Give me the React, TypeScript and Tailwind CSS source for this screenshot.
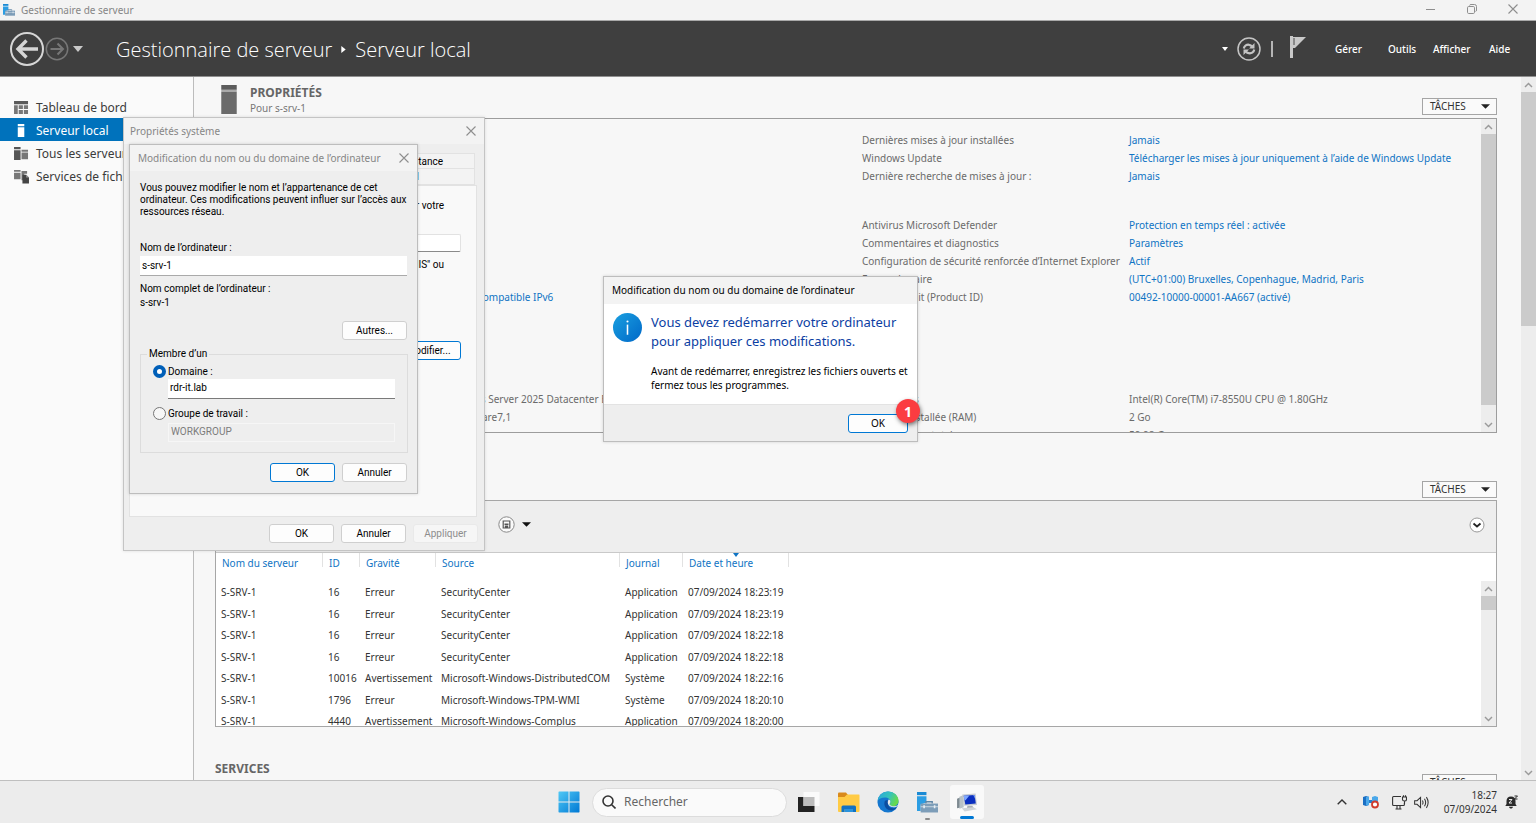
import React, { useState } from "react";

const ui = "font-['Noto_Sans','Open_Sans',sans-serif]";
const classic = "font-['Roboto','Liberation_Sans',sans-serif]";

type Property = { label: string; value: string; link?: boolean };

const networkProps: Property[][] = [
  [
    { label: "Nom de l’ordinateur", value: "s-srv-1", link: true },
    { label: "Groupe de travail", value: "WORKGROUP", link: true },
    { label: "", value: "" },
  ],
  [
    { label: "Pare-feu Microsoft Defender", value: "Public : actif", link: true },
    { label: "Gestion à distance", value: "Activé", link: true },
    { label: "Bureau à distance", value: "Désactivé", link: true },
    { label: "Association de cartes réseau", value: "Désactivé", link: true },
    { label: "Ethernet0", value: "192.168.100.201, compatible IPv6", link: true },
  ],
  [
    { label: "Version du système", value: "Microsoft Windows Server 2025 Datacenter Evaluation" },
    { label: "Informations matérielles", value: "VMware, Inc. VMware7,1" },
  ],
];

const updateProps: Property[][] = [
  [
    { label: "Dernières mises à jour installées", value: "Jamais", link: true },
    {
      label: "Windows Update",
      value: "Télécharger les mises à jour uniquement à l’aide de Windows Update",
      link: true,
    },
    { label: "Dernière recherche de mises à jour :", value: "Jamais", link: true },
  ],
  [
    { label: "Antivirus Microsoft Defender", value: "Protection en temps réel : activée", link: true },
    { label: "Commentaires et diagnostics", value: "Paramètres", link: true },
    { label: "Configuration de sécurité renforcée d’Internet Explorer", value: "Actif", link: true },
    { label: "Fuseau horaire", value: "(UTC+01:00) Bruxelles, Copenhague, Madrid, Paris", link: true },
    { label: "ID de produit (Product ID)", value: "00492-10000-00001-AA667 (activé)", link: true },
  ],
  [
    { label: "Processeurs", value: "Intel(R) Core(TM) i7-8550U CPU @ 1.80GHz" },
    { label: "Mémoire installée (RAM)", value: "2 Go" },
    { label: "Espace disque total", value: "59,98 Go" },
  ],
];

const events = [
  ["S-SRV-1", "16", "Erreur", "SecurityCenter", "Application", "07/09/2024 18:23:19"],
  ["S-SRV-1", "16", "Erreur", "SecurityCenter", "Application", "07/09/2024 18:23:19"],
  ["S-SRV-1", "16", "Erreur", "SecurityCenter", "Application", "07/09/2024 18:22:18"],
  ["S-SRV-1", "16", "Erreur", "SecurityCenter", "Application", "07/09/2024 18:22:18"],
  ["S-SRV-1", "10016", "Avertissement", "Microsoft-Windows-DistributedCOM", "Système", "07/09/2024 18:22:16"],
  ["S-SRV-1", "1796", "Erreur", "Microsoft-Windows-TPM-WMI", "Système", "07/09/2024 18:20:10"],
  ["S-SRV-1", "4440", "Avertissement", "Microsoft-Windows-Complus", "Application", "07/09/2024 18:20:00"],
];

function Chevron({ down = false }: { down?: boolean }) {
  return (
    <svg viewBox="0 0 9 6" className="h-[6px] w-[9px]" fill="none" stroke="#9a9a9a" strokeWidth="1.4">
      <path d={down ? "M1 1l3.5 3.6L8 1" : "M1 5l3.5-3.6L8 5"} />
    </svg>
  );
}

function ScrollBar({ thumb }: { thumb: string }) {
  return (
    <div className="flex w-[15px] shrink-0 flex-col items-center bg-[#ededed]">
      <div className="flex h-[15px] shrink-0 items-center">
        <Chevron />
      </div>
      <div className="min-h-0 w-full flex-1">
        <div className={`w-full bg-[#cbcbcb] ${thumb}`} />
      </div>
      <div className="flex h-[15px] shrink-0 items-center">
        <Chevron down />
      </div>
    </div>
  );
}

function ServerManagerIcon({ className }: { className: string }) {
  return (
    <svg viewBox="0 0 20 20" className={className}>
      <path fill="#1a8ad4" d="M0 0h9v3H0z" />
      <path fill="#2b9de3" d="M0 4h9v6l-5.500 2v6H0z" />
      <path fill="none" stroke="#5f86a6" strokeWidth="1.3" d="M8.500 11V9.300h6V11" />
      <path fill="#7d9db8" d="M3.500 11h16.500v8.500h-16.500z" />
      <path fill="#c3d2de" d="M3.500 13.500h16.500v1h-16.500z" />
      <path fill="#e9eff4" d="M6 12.500h1.500v3H6zM16 12.500h1.500v3H16z" />
    </svg>
  );
}

function CloseIcon() {
  return (
    <svg viewBox="0 0 10 10" className="size-[10px]" fill="none" stroke="#8e8e8e" strokeWidth="1.100">
      <path d="M.5.5l9 9M9.500.5l-9 9" />
    </svg>
  );
}

function TitleBar() {
  return (
    <div className="flex h-[21px] shrink-0 items-center border-b border-[#a9a9a9] bg-[#f3f3f3] pl-[3px] text-[10px] text-[#868686]">
      <ServerManagerIcon className="size-[12px]" />
      <span className="ml-[6px]">Gestionnaire de serveur</span>
      <div className="mr-[18px] ml-auto flex items-center gap-[31px] pb-[2px]">
        <button aria-label="Réduire" className="flex">
          <svg viewBox="0 0 10 10" className="size-[10px]" fill="none" stroke="#8e8e8e">
            <path d="M0 5.500h9" />
          </svg>
        </button>
        <button aria-label="Restaurer" className="flex">
          <svg viewBox="0 0 10 10" className="size-[10px]" fill="none" stroke="#8e8e8e">
            <rect x=".5" y="2.500" width="7" height="7" rx="1.200" />
            <path d="M2.500 1.500q.2-1 1.500-1h3.500q2 0 2 2V6q0 1.300-1 1.500" />
          </svg>
        </button>
        <button aria-label="Fermer" className="flex">
          <CloseIcon />
        </button>
      </div>
    </div>
  );
}

function Header() {
  return (
    <header className="flex h-[56px] shrink-0 items-center border-b border-[#8f8f8f] bg-[#3f3f3f] pl-[9px] text-white">
      <button aria-label="Précédent">
        <svg viewBox="0 0 36 36" className="size-[36px]" fill="none" stroke="#d6d6d6">
          <circle cx="18" cy="18" r="16" strokeWidth="2" />
          <path strokeWidth="3.400" d="M29 18H10M17.500 9.500L9 18l8.500 8.500" />
        </svg>
      </button>
      <button aria-label="Suivant">
        <svg viewBox="0 0 24 24" className="size-[24px]" fill="none" stroke="#777">
          <circle cx="12" cy="12" r="10.700" strokeWidth="1.500" />
          <path strokeWidth="2" d="M5.500 12h12M12.500 6.500L18 12l-5.500 5.500" />
        </svg>
      </button>
      <button aria-label="Historique" className="ml-[4px]">
        <svg viewBox="0 0 10 6" className="h-[6px] w-[10px]" fill="#c9c9c9">
          <path d="M0 0h10L5 6z" />
        </svg>
      </button>
      <h1 className="ml-[33px] flex items-center pt-[2px] font-['Open_Sans','Noto_Sans',sans-serif] text-[20px] font-light whitespace-nowrap">
        <span>Gestionnaire de serveur</span>
        <svg viewBox="0 0 5 8" className="mx-[9px] h-[7px] w-[5px]" fill="#fff">
          <path d="M0 0l5 4-5 4z" />
        </svg>
        <span>Serveur local</span>
      </h1>
      <div className="ml-auto flex items-center text-[10px]">
        <button aria-label="Notifications récentes">
          <svg viewBox="0 0 6 4" className="h-[4px] w-[6px]" fill="#fff">
            <path d="M0 0h6L3 4z" />
          </svg>
        </button>
        <button aria-label="Actualiser" className="ml-[9px]">
          <svg viewBox="0 0 24 24" className="size-[24px]" fill="none" stroke="#c4c4c4">
            <circle cx="12" cy="12" r="11" strokeWidth="1.500" />
            <path strokeWidth="2.200" d="M6.800 11.500c.4-3 3-4.200 5.400-3.700 1.300.2 2.200.9 2.900 1.700M17.200 12.500c-.4 3-3 4.200-5.400 3.700-1.300-.2-2.200-.9-2.900-1.700" />
            <path fill="#c4c4c4" stroke="none" d="M17.500 6v5.500H12zM6.500 18v-5.500H12z" />
          </svg>
        </button>
        <div className="ml-[10px] h-[16px] w-[2px] bg-[#b5b5b5]" />
        <button aria-label="Notifications" className="mb-[4px] ml-[17px]">
          <svg viewBox="0 0 16 22" className="h-[22px] w-[16px]">
            <path fill="#c9c9c9" d="M0 0h3v22H0z" />
            <path fill="#c9c9c9" d="M3 1h13L5 12H3z" />
            <path stroke="#4a4a4a" d="M4 2v7" />
          </svg>
        </button>
        <nav className="ml-[29px] flex pt-[1px] font-medium">
          <button className="w-[53px] text-left">Gérer</button>
          <button className="w-[45px] text-left">Outils</button>
          <button className="w-[56px] text-left">Afficher</button>
          <button className="w-[47px] text-left">Aide</button>
        </nav>
      </div>
    </header>
  );
}

const navIcons: Record<string, React.ReactNode> = {
  dashboard: (
    <g fill="#5a5a5a">
      <path d="M0 0h15v3.500H0z" />
      <path fill="#777" d="M0 4.500h4V14H0zM5 4.500h4.500v4.200H5zM10.500 4.500H15v4.200h-4.500zM5 9.700h4.500V14H5zM10.500 9.700H15V14h-4.500z" />
    </g>
  ),
  local: <path fill="#fff" d="M4 0h7v2.500H4zM4 3.500h7V14H4z" />,
  all: (
    <g fill="#555">
      <path d="M0 0h7v2.500H0zM0 3.500h7V14H0z" />
      <path fill="#777" d="M8 3h7v2H8zM8 6h7v7H8z" />
    </g>
  ),
  files: (
    <g fill="#777">
      <path d="M0 0h7v2H0zM0 3h7v7H0zM8 1h6v3h-3v7H8z" />
      <path fill="#444" d="M9 5h4l3 3v6.500H9z" />
      <path fill="#999" d="M13 5l3 3h-3z" />
    </g>
  ),
};

const navItems = [
  { icon: "dashboard", label: "Tableau de bord" },
  { icon: "local", label: "Serveur local" },
  { icon: "all", label: "Tous les serveurs" },
  { icon: "files", label: "Services de fichiers et de stockage" },
];

function Sidebar() {
  return (
    <nav className="w-[194px] shrink-0 border-r border-[#bcbcbc] bg-[#fafafa] pt-[18px] text-[12px] text-[#3b3b3b]">
      {navItems.map((item) => (
        <a
          key={item.icon}
          href="#"
          className={`flex h-[23px] items-center gap-[7px] overflow-hidden pt-[2px] pl-[14px] whitespace-nowrap ${
            item.icon === "local" ? "bg-[#0072bc] text-white" : ""
          }`}
        >
          <svg viewBox="0 0 16 15" className="h-[14px] w-[15px] shrink-0">
            {navIcons[item.icon]}
          </svg>
          {item.label}
        </a>
      ))}
    </nav>
  );
}

function TasksButton() {
  return (
    <button className="flex h-[17px] w-[75px] items-center justify-between border border-[#a5a5a5] bg-[#fafafa] pr-[6px] pl-[7px] text-[10px] text-[#333]">
      TÂCHES
      <svg viewBox="0 0 10 5" className="h-[5px] w-[9px]" fill="#222">
        <path d="M0 0h10L5 5z" />
      </svg>
    </button>
  );
}

function PropertyColumn({ groups, columns }: { groups: Property[][]; columns: string }) {
  return (
    <dl className="flex flex-col">
      {groups.map((group, i) => (
        <div key={i} className={i === 0 ? "" : i === 1 ? "mt-[31px]" : "mt-[84px]"}>
          {group.map((p, j) => (
            <div key={j} className={`grid h-[18px] items-center whitespace-nowrap ${columns}`}>
              <dt>{p.label}</dt>
              <dd>
                {p.link ? (
                  <a href="#" className="text-[#0f74c4]">
                    {p.value}
                  </a>
                ) : (
                  p.value
                )}
              </dd>
            </div>
          ))}
        </div>
      ))}
    </dl>
  );
}

function PropertiesSection() {
  return (
    <section>
      <div className="flex h-[41px] items-start">
        <svg viewBox="0 0 16 30" className="mt-[8px] ml-[6px] h-[29px] w-[16px]">
          <path fill="#5c5c5c" d="M0 0h16v5H0z" />
          <path fill="#aaa" d="M0 5h16v2H0z" />
          <path fill="#6b6b6b" d="M0 7h16v23H0z" />
        </svg>
        <div className="mt-[8px] ml-[13px]">
          <h2 className="text-[12px] leading-[16px] font-bold text-[#666]">PROPRIÉTÉS</h2>
          <p className="text-[10px] leading-[15px] text-[#777]">Pour s-srv-1</p>
        </div>
        <div className="mt-[21px] ml-auto">
          <TasksButton />
        </div>
      </div>
      <div className="flex h-[315px] overflow-hidden border border-[#9d9d9d] text-[10px] text-[#6b6b6b]">
        <div className="flex flex-1 pt-[12px] pl-[6px]">
          <div className="w-[640px] shrink-0">
            <PropertyColumn groups={networkProps} columns="grid-cols-[174px_1fr]" />
          </div>
          <PropertyColumn groups={updateProps} columns="grid-cols-[267px_1fr]" />
        </div>
        <ScrollBar thumb="h-[271px]" />
      </div>
    </section>
  );
}

function EventsSection() {
  return (
    <section>
      <div className="flex h-[67px] items-start justify-between">
        <div className="mt-[34px]">
          <h2 className="text-[12px] leading-[16px] font-bold text-[#666]">ÉVÉNEMENTS</h2>
          <p className="text-[10px] leading-[15px] text-[#777]">Tous les événements | 10 au total</p>
        </div>
        <div className="mt-[48px]">
          <TasksButton />
        </div>
      </div>
      <div className="flex h-[227px] flex-col overflow-hidden border border-[#a6a6a6] bg-white text-[10px]">
        <div className="flex h-[52px] shrink-0 items-center border-b border-[#c9c9c9] bg-[#eeeeee] pr-[11px] pb-[4px] pl-[282px]">
          <button aria-label="Enregistrer la requête">
            <svg viewBox="0 0 17 17" className="size-[17px]" fill="none" stroke="#8a8a8a">
              <circle cx="8.500" cy="8.500" r="7.700" fill="#fafafa" />
              <path stroke="#555" strokeWidth="1.200" d="M5.200 5h6.600v7H5.200z" />
              <path fill="#555" stroke="none" d="M6.500 7.500h4v1.500h-4zM6.800 9.500h3.400V12H6.800z" />
            </svg>
          </button>
          <button aria-label="Requêtes enregistrées" className="ml-[7px]">
            <svg viewBox="0 0 10 5" className="h-[5px] w-[9px]" fill="#111">
              <path d="M0 0h10L5 5z" />
            </svg>
          </button>
          <button aria-label="Développer les critères" className="ml-auto">
            <svg viewBox="0 0 16 16" className="size-[16px]" fill="none">
              <circle cx="8" cy="8" r="7" fill="#fff" stroke="#999" />
              <path stroke="#222" strokeWidth="1.800" d="M4.500 6.500L8 9.500l3.500-3" />
            </svg>
          </button>
        </div>
        <div className="flex min-h-0 flex-1 items-start">
          <table className="w-[573px] shrink-0 table-fixed border-collapse whitespace-nowrap text-[#333]">
            <colgroup>
              <col className="w-[107px]" />
              <col className="w-[37px]" />
              <col className="w-[76px]" />
              <col className="w-[184px]" />
              <col className="w-[63px]" />
              <col className="w-[106px]" />
            </colgroup>
            <thead>
              <tr className="h-[29px] text-left text-[#0f74c4]">
                {["Nom du serveur", "ID", "Gravité", "Source", "Journal", "Date et heure"].map((h) => (
                  <th key={h} className="relative p-0 pb-[8px] pl-[6px] font-normal">
                    {h}
                    <span className="absolute top-0 right-0 h-[14px] w-px bg-[#e2e2e2]" />
                    {h === "Date et heure" && (
                      <svg viewBox="0 0 6 4" className="absolute top-0 left-[50px] h-[4px] w-[6px]" fill="#0f74c4">
                        <path d="M0 0h6L3 4z" />
                      </svg>
                    )}
                  </th>
                ))}
              </tr>
            </thead>
            <tbody>
              {events.map((row, i) => (
                <tr key={i} className={i % 2 ? "h-[22px]" : "h-[21px]"}>
                  {row.map((cell, j) => (
                    <td key={j} className="p-0 pl-[5px]">
                      {cell}
                    </td>
                  ))}
                </tr>
              ))}
            </tbody>
          </table>
          <div className="ml-auto flex h-full pt-[28px]">
            <ScrollBar thumb="h-[14px]" />
          </div>
        </div>
      </div>
    </section>
  );
}

function ServicesSection() {
  return (
    <section className="flex items-start justify-between">
      <h2 className="mt-[34px] text-[12px] leading-[16px] font-bold text-[#666]">SERVICES</h2>
      <div className="mt-[47px]">
        <TasksButton />
      </div>
    </section>
  );
}

function DialogButton({
  children,
  primary = false,
  disabled = false,
  width = "w-[65px]",
}: {
  children: React.ReactNode;
  primary?: boolean;
  disabled?: boolean;
  width?: string;
}) {
  const tone = disabled
    ? "border-[#e9e9e9] bg-[#f6f6f6] text-[#8d8d8d]"
    : primary
      ? "border-[#0078d4] bg-[#fdfdfd] text-black"
      : "border-[#cfcfcf] bg-[#fdfdfd] text-black";
  return (
    <button
      disabled={disabled}
      className={`flex h-[19px] items-center justify-center rounded-[3px] border text-[10px] ${width} ${tone}`}
    >
      {children}
    </button>
  );
}

function SystemPropertiesDialog() {
  return (
    <div
      role="dialog"
      aria-label="Propriétés système"
      className={`absolute top-[117px] left-[123px] flex h-[434px] w-[362px] flex-col border border-[#c4c4c4] bg-[#eeeeee] text-[10px] text-black shadow-[0_0_3px_rgba(0,0,0,0.12)] ${classic}`}
    >
      <div className={`flex h-[26px] shrink-0 items-center justify-between bg-[#f3f3f3] pr-[8px] pl-[6px] whitespace-nowrap text-[#868686] ${ui}`}>
        Propriétés système
        <button aria-label="Fermer">
          <CloseIcon />
        </button>
      </div>
      <div className="mr-[7px] ml-[5px] mt-[9px] flex h-[364px] shrink-0 flex-col">
        <div className="mr-[2px] flex h-[16px] shrink-0 items-center border border-[#e2e2e2] bg-[#f3f3f3]">
          <span className="flex-1 pl-[40px]">Avancé</span>
          <span className="pr-[31px]">Utilisation à distance</span>
        </div>
        <div className="mr-[2px] flex h-[16px] shrink-0 items-center border border-t-0 border-[#e2e2e2] bg-[#f3f3f3] text-[#1d3f9c]">
          <span className="flex-1 pl-[40px]">Nom de l’ordinateur</span>
          <span className="pr-[55px]">Matériel</span>
        </div>
        <div className="flex min-h-0 flex-1 flex-col border border-[#e2e2e2] bg-[#f9f9f9] pr-[15px] pl-[15px] text-right">
          <p className="mt-[14px] pr-[17px] leading-[12px] whitespace-nowrap">
            Windows utilise les informations suivantes pour identifier votre
          </p>
          <input
            aria-label="Description de l’ordinateur"
            className="mt-[22px] h-[18px] w-[200px] self-end rounded-[2px] border border-[#e2e2e2] border-b-[#8a8a8a] bg-white"
          />
          <p className="mt-[7px] pr-[17px] leading-[12px]">Par exemple : "Serveur de production IIS" ou</p>
          <div className="mt-[70px] self-end">
            <DialogButton primary>Modifier...</DialogButton>
          </div>
        </div>
      </div>
      <div className="mt-[7px] mr-[6px] flex justify-end gap-[7px]">
        <DialogButton>OK</DialogButton>
        <DialogButton>Annuler</DialogButton>
        <DialogButton disabled>Appliquer</DialogButton>
      </div>
    </div>
  );
}

function RenameDialog() {
  const [name, setName] = useState("s-srv-1");
  const [domain, setDomain] = useState("rdr-it.lab");
  const [member, setMember] = useState("domain");
  const field = "h-[20px] border-b bg-white px-[2px] text-[10px] outline-none";
  const radio =
    "size-[13px] appearance-none rounded-full border border-[#767676] bg-[#f7f7f7] checked:border-[4px] checked:border-[#005fb8] checked:bg-white";
  return (
    <div
      role="dialog"
      aria-label="Modification du nom ou du domaine de l’ordinateur"
      className={`absolute top-[144px] left-[129px] flex h-[350px] w-[289px] flex-col border border-[#bdbdbd] bg-[#eeeeee] text-[10px] leading-[12px] text-black shadow-[0_0_3px_rgba(0,0,0,0.15)] ${classic}`}
    >
      <div className={`flex h-[26px] shrink-0 items-center justify-between bg-[#f3f3f3] pr-[8px] pl-[8px] whitespace-nowrap text-[#868686] ${ui}`}>
        Modification du nom ou du domaine de l’ordinateur
        <button aria-label="Fermer">
          <CloseIcon />
        </button>
      </div>
      <div className="flex flex-col px-[10px] pt-[11px]">
        <p className="whitespace-nowrap">
          Vous pouvez modifier le nom et l’appartenance de cet
          <br />
          ordinateur. Ces modifications peuvent influer sur l’accès aux
          <br />
          ressources réseau.
        </p>
        <label htmlFor="computer-name" className="mt-[24px]">
          Nom de l’ordinateur :
        </label>
        <input
          id="computer-name"
          value={name}
          onChange={(e) => setName(e.target.value)}
          className={`mt-[2px] border-[#aaaaaa] pb-[1px] ${field}`}
        />
        <p className="mt-[7px]">Nom complet de l’ordinateur :</p>
        <p className="mt-[2px]">s-srv-1</p>
        <div className="mt-[12px] self-end">
          <DialogButton>Autres...</DialogButton>
        </div>
      </div>
      <fieldset className="mx-[10px] mt-[8px] h-[105px] border border-[#dcdcdc] px-[12px]">
        <legend className="-ml-[6px] px-[2px]">Membre d’un</legend>
        <label className="mt-[5px] flex items-center gap-[2px]">
          <input
            type="radio"
            name="member"
            className={radio}
            checked={member === "domain"}
            onChange={() => setMember("domain")}
          />
          Domaine :
        </label>
        <input
          aria-label="Domaine"
          value={domain}
          onChange={(e) => setDomain(e.target.value)}
          className={`mt-[1px] ml-[15px] block w-[227px] border-[#7a7a7a] pb-[2px] ${field}`}
        />
        <label className="mt-[8px] flex items-center gap-[2px]">
          <input
            type="radio"
            name="member"
            className={radio}
            checked={member === "workgroup"}
            onChange={() => setMember("workgroup")}
          />
          Groupe de travail :
        </label>
        <input
          aria-label="Groupe de travail"
          disabled
          value="WORKGROUP"
          readOnly
          className="mt-[3px] ml-[15px] block h-[19px] w-[227px] border border-[#f6f6f6] px-[2px] pb-[3px] text-[10px] text-[#7c7c7c]"
        />
      </fieldset>
      <div className="mt-[10px] mr-[10px] flex justify-end gap-[7px]">
        <DialogButton primary>OK</DialogButton>
        <DialogButton>Annuler</DialogButton>
      </div>
    </div>
  );
}

function RestartMessage() {
  return (
    <div
      role="alertdialog"
      aria-label="Redémarrage requis"
      className="absolute top-[276px] left-[603px] w-[315px] border border-[#bdbdbd] bg-white text-[10px] text-black shadow-[0_0_3px_rgba(0,0,0,0.15)]"
    >
      <div className="flex h-[27px] items-center bg-[#f3f3f3] pl-[8px]">
        Modification du nom ou du domaine de l’ordinateur
      </div>
      <div className="flex h-[100px] gap-[9px] pt-[9px] pl-[9px]">
        <svg viewBox="0 0 30 30" className="size-[29px] shrink-0">
          <defs>
            <linearGradient id="info" x1="0" y1="0" x2="1" y2="1">
              <stop offset="0" stopColor="#1aa0e0" />
              <stop offset="1" stopColor="#0068c8" />
            </linearGradient>
          </defs>
          <circle cx="15" cy="15" r="15" fill="url(#info)" />
          <circle cx="15" cy="8.800" r="1.100" fill="#fff" />
          <path stroke="#fff" strokeWidth="1.600" d="M15 12v10.500" />
        </svg>
        <div className="whitespace-nowrap">
          <p className="text-[13px] leading-[19px] text-[#0b3ea3]">
            Vous devez redémarrer votre ordinateur
            <br />
            pour appliquer ces modifications.
          </p>
          <p className="mt-[13px] leading-[14px]">
            Avant de redémarrer, enregistrez les fichiers ouverts et
            <br />
            fermez tous les programmes.
          </p>
        </div>
      </div>
      <div className="relative flex h-[37px] items-center justify-end border-t border-[#e3e3e3] bg-[#eeeeee] pr-[9px]">
        <DialogButton primary width="w-[60px]">
          OK
        </DialogButton>
        <span className="absolute -top-[6px] -right-[3px] flex size-[24px] items-center justify-center rounded-full bg-[#fb3c41] text-[14px] font-bold text-white shadow-[1px_2px_4px_rgba(0,0,0,0.5)]">
          1
        </span>
      </div>
    </div>
  );
}

function Taskbar() {
  return (
    <footer className="relative z-10 flex h-[43px] shrink-0 items-center border-t border-[#bfbfbf] bg-[#ececec]">
      <div className="flex-1" />
      <div className="flex items-center pl-[6px]">
        <button aria-label="Démarrer">
          <svg viewBox="0 0 22 22" className="size-[22px]">
            <defs>
              <linearGradient id="win" x1="0" y1="0" x2="1" y2="1">
                <stop offset="0" stopColor="#4fc8f5" />
                <stop offset="1" stopColor="#0078d4" />
              </linearGradient>
            </defs>
            <path fill="url(#win)" d="M1 .5h9.500v10H.5V1zM11.500.5H21l.5.5v9.500h-10zM.5 11.500h10v10H1l-.5-.5zM11.500 11.500h10V21l-.5.5h-9.500z" />
          </svg>
        </button>
        <label className="ml-[12px] flex h-[29px] w-[195px] items-center rounded-full border border-[#dcdcdc] bg-[#fafafa] pl-[9px]">
          <svg viewBox="0 0 14 14" className="size-[14px] shrink-0" fill="none" stroke="#333" strokeWidth="1.600">
            <circle cx="6" cy="6" r="5" />
            <path d="M9.700 9.700L13.500 13.500" />
          </svg>
          <input
            aria-label="Rechercher"
            placeholder="Rechercher"
            className="ml-[8px] w-[130px] bg-transparent text-[12px] outline-none placeholder:text-[#666]"
          />
        </label>
        <button aria-label="Vue des tâches" className="ml-[11px]">
          <svg viewBox="0 0 22 22" className="size-[22px]">
            <path fill="#222" d="M0 6h16.500v15H0z" />
            <path fill="#fafafa" d="M5.500 1h16v14h-16z" />
            <path fill="#bcbcbc" d="M5.500 6h11v9h-11z" />
          </svg>
        </button>
        <button aria-label="Explorateur de fichiers" className="ml-[17px]">
          <svg viewBox="0 0 23 21" className="h-[21px] w-[23px]">
            <path fill="#d98a1c" d="M1 1.500Q1 .5 2 .5h7L11 3v3H1z" />
            <path fill="#ffcb45" d="M1 5h6.500L10 2.500h12q.5 0 .5 1V19q0 1-1 1H2q-1 0-1-1z" />
            <path fill="#1272c2" d="M4.500 20v-5q0-1.500 1.500-1.500h11.500q1.500 0 1.500 1.500v5h-3v-2.500H7.500V20z" />
            <path fill="#2a93dd" d="M7.500 17H16v3H7.500z" />
          </svg>
        </button>
        <button aria-label="Microsoft Edge" className="ml-[17px]">
          <svg viewBox="0 0 24 24" className="size-[22px]">
            <defs>
              <linearGradient id="edge-top" x1="0" y1="0" x2="1" y2=".4">
                <stop offset="0" stopColor="#2aa5e0" />
                <stop offset=".6" stopColor="#36c4b8" />
                <stop offset="1" stopColor="#66d94f" />
              </linearGradient>
            </defs>
            <circle cx="12" cy="12" r="11.500" fill="#1577cf" />
            <path fill="url(#edge-top)" d="M.6 11C1.300 5 6 .5 12 .5c6.800 0 11.500 5 11.500 10 0 4-3 6-6 6-2.500 0-4-1-4-1.600 0-.5 1.100-1 1.100-3 0-2.500-2.300-4.700-6-4.700C5 7.200 1.700 8.500.6 11z" />
            <path fill="#0c4da0" d="M8.500 10.800c-2 6 2.500 10.700 8 10.400 2-.1 4-1.700 5.300-3.400-4 2.200-8.800.9-9.800-2.800-.5-1.800.2-3 .8-3.600-.8-1.500-3.200-1.900-4.300-.6z" />
            <path fill="#ececec" d="M13.700 14.600c-.5-.7 1.400-1.400.8-3.700-.3-1-1-1.500-1.700-1.600-1.300 1.600-1.700 4.500.4 6.600 2 2 6.500 2.400 9.500.4l.3-1.100c-3 2.200-8 1.500-9.300-.6z" />
          </svg>
        </button>
        <button aria-label="Gestionnaire de serveur" className="relative ml-[18px]">
          <ServerManagerIcon className="size-[21px]" />
          <span className="absolute -bottom-[7px] left-[8px] h-[2px] w-[5px] rounded-full bg-[#8a8a8a]" />
        </button>
        <button
          aria-label="Propriétés système"
          className="relative ml-[12px] flex size-[34px] items-center justify-center rounded-[3px] bg-[#f9f9f9]"
        >
          <svg viewBox="0 0 22 20" className="h-[19px] w-[21px]">
            <path fill="#7e8a91" d="M0 6l5-2v11l-5 1z" />
            <path fill="#b9c2c7" d="M2.500 4L7 2v13l-4.500 1.500z" />
            <path fill="#c6cbd2" d="M5.500 1.500L19.500.5l1.500 12-13.500 1z" />
            <path fill="#0a2fc0" d="M7 3l11.500-1 1.200 9L8.700 12z" />
            <path fill="#7fa8ff" d="M7 3l6-.5L9 7.500 7.700 7.700zM17 2.200l1.500-.2.500 4z" />
            <path fill="#aab0b6" d="M11 13.500h5l2 3-8 1z" />
            <path fill="#d0d4d8" d="M5 16l12-1 4 2-13 2.500z" />
          </svg>
          <span className="absolute bottom-0 left-[10px] h-[3px] w-[14px] rounded-full bg-[#0078d4]" />
        </button>
      </div>
      <div className="flex flex-1 basis-0 justify-end">
        <div className="mr-[18px] flex items-center">
          <button aria-label="Icônes masquées">
            <svg viewBox="0 0 10 6" className="h-[6px] w-[10px]" fill="none" stroke="#333" strokeWidth="1.400">
              <path d="M.7 5.300L5 1l4.300 4.300" />
            </svg>
          </button>
          <svg viewBox="0 0 16 14" className="ml-[16px] h-[14px] w-[16px]">
            <path fill="#1a6fc4" d="M0 2l3-1 3 1v8l-3 1-3-1z" />
            <path fill="#4aa8ea" d="M3 2l3-.5V10l-3 .5zM9 2l3-1 3 1v6l-6 2z" />
            <path fill="#2580cf" d="M6 5h3v3H6z" />
            <circle cx="12" cy="9.500" r="3" fill="#fff" stroke="#d03a2b" strokeWidth="1.800" />
          </svg>
          <svg viewBox="0 0 15 15" className="ml-[13px] size-[15px]" fill="none" stroke="#333" strokeWidth="1.100">
            <path d="M9 1.500H1.500Q.6 1.500.6 2.500v7q0 1 1 1h9.800q1 0 1-1V8M3.500 14h6M5 10.500V14M8 10.500V14" />
            <path fill="#eee" d="M10.500 2h4v2.500q0 1.500-2 1.500t-2-1.500zM11.500 2V.3M13.500 2V.3M12.500 6v3" />
          </svg>
          <svg viewBox="0 0 16 14" className="ml-[7px] h-[13px] w-[15px]" fill="none" stroke="#333" strokeWidth="1.100">
            <path d="M.6 5h2.600L7 1.500v11L3.200 9H.6zM9 4.800q1.300 2.200 0 4.400M11.200 3q2.500 4 0 8M13.300 1.200q3.700 5.800 0 11.600" />
          </svg>
          <div className="ml-[15px] text-right text-[10px] leading-[14px] text-[#333]">
            <div>18:27</div>
            <div>07/09/2024</div>
          </div>
          <svg viewBox="0 0 13 14" className="ml-[8px] h-[14px] w-[13px]">
            <path fill="#2a2a2a" d="M6 1.500c-3 0-4.500 2-4.500 4.500v3L.3 11h11.400l-1.200-2V6C10.500 3.500 9 1.500 6 1.500zM4 11.800h4c-.3 2.400-3.700 2.400-4 0z" />
            <path fill="none" stroke="#ececec" d="M4 4.500h3L4 8h3" />
            <path fill="none" stroke="#2a2a2a" d="M9.500 1h3l-3 3h3" />
          </svg>
        </div>
      </div>
    </footer>
  );
}

export default function App() {
  return (
    <div className={`relative flex h-screen flex-col overflow-hidden bg-[#f7f7f7] ${ui}`}>
      <TitleBar />
      <Header />
      <div className="flex min-h-0 flex-1">
        <Sidebar />
        <main className="min-w-0 flex-1 overflow-hidden pr-[24px] pl-[21px]">
          <PropertiesSection />
          <EventsSection />
          <ServicesSection />
        </main>
        <ScrollBar thumb="h-[234px]" />
      </div>
      <Taskbar />
      <SystemPropertiesDialog />
      <RenameDialog />
      <RestartMessage />
    </div>
  );
}
